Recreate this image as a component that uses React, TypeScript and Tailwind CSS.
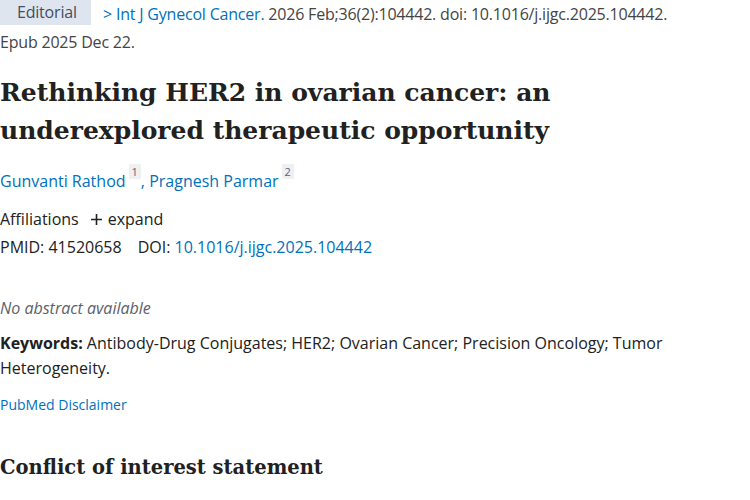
const sans = "font-['Open_Sans',sans-serif]";
const serif = "font-['DejaVu_Serif',serif]";

const Sup = ({ n }: { n: string }) => (
  <sup className="ml-[3px] bg-[#eef0f2] px-[3px] text-[11px] text-[#5b616b] align-[6px]">{n}</sup>
);

export default function App() {
  return (
    <div className={`${sans} w-[750px] h-[500px] overflow-hidden bg-white text-[16px] text-[#212121]`}>
      <div className="leading-[28px] text-[#444] tracking-[-0.2px]">
        <span className="inline-block h-[25px] w-[91px] bg-[#dfe5ee] pl-[17px] leading-[25px] align-top text-[#3f4e63]">
          Editorial
        </span>
        <span className="ml-3 text-[#0071bc]">&gt; Int J Gynecol Cancer.</span> 2026 Feb;36(2):104442. doi:
        10.1016/j.ijgc.2025.104442.
        <br />
        Epub 2025 Dec 22.
      </div>

      <h1 className={`${serif} mt-[18px] text-[25px] font-bold leading-[38px] text-[#212121]`}>
        Rethinking HER2 in ovarian cancer: an
        <br />
        underexplored therapeutic opportunity
      </h1>

      <div className="mt-[21px] leading-[20px]">
        <a className="text-[#0071bc]">Gunvanti Rathod</a>
        <Sup n="1" />
        <span className="text-[#0071bc]">, </span>
        <a className="text-[#0071bc]">Pragnesh Parmar</a>
        <Sup n="2" />
      </div>

      <div className="mt-[18px] flex items-center leading-[20px]">
        <span>Affiliations</span>
        <span className="ml-[11px] flex items-center">
          <svg width="13" height="13" viewBox="0 0 13 13" className="mr-[5px]">
            <path d="M6.5 1v11M1 6.5h11" stroke="#212121" strokeWidth="1.6" />
          </svg>
          expand
        </span>
      </div>

      <div className="mt-[8px] leading-[20px]">
        PMID: 41520658
        <span className="ml-[16px]">DOI: </span>
        <a className="text-[#0071bc]">10.1016/j.ijgc.2025.104442</a>
      </div>

      <p className="mt-[41px] italic leading-[20px] text-[#5b616b]">No abstract available</p>

      <p className="mt-[13px] w-[700px] leading-[25px]">
        <strong className="font-bold">Keywords:</strong> Antibody-Drug Conjugates; HER2; Ovarian Cancer; Precision
        Oncology; Tumor Heterogeneity.
      </p>

      <a className="mt-[14px] block text-[14px] leading-[20px] text-[#0071bc]">PubMed Disclaimer</a>

      <h2 className={`${serif} mt-[38px] text-[19.5px] font-bold leading-[30px]`}>Conflict of interest statement</h2>

      <p className="mt-[24px] leading-[20px] text-[#444]">
        The authors declare that they have no known competing financial interests.
      </p>
    </div>
  );
}
